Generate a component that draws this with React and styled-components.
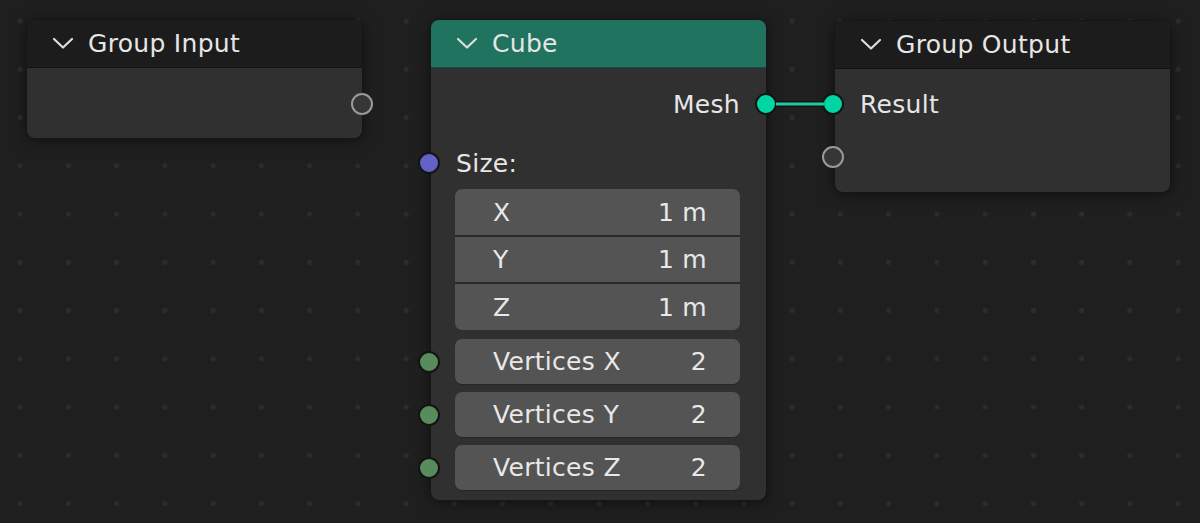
import React from "react";
import styled, { createGlobalStyle } from "styled-components";

const Global = createGlobalStyle`
  html, body { margin: 0; padding: 0; background: #1f1f1f; }
  body { font-family: "DejaVu Sans", "Liberation Sans", sans-serif; }
`;

const Canvas = styled.div`
  position: relative;
  width: 1200px;
  height: 523px;
  overflow: hidden;
  background-color: #1f1f1f;
  background-image: radial-gradient(circle, #2c2c2c 2.2px, transparent 3px);
  background-size: 48.25px 48.25px;
  background-position: -4px -3px;
`;

const Node = styled.div`
  position: absolute;
  left: ${(p) => p.$x}px;
  top: ${(p) => p.$y}px;
  width: 335px;
  background: #303030;
  border-radius: 8px;
  box-shadow: 0 0 0 1px #161616, 0 2px 14px rgba(0, 0, 0, 0.55);
  display: flex;
  flex-direction: column;
`;

const Header = styled.div`
  height: 48px;
  box-sizing: border-box;
  background: ${(p) => p.$color || "#1c1c1c"};
  border-radius: 8px 8px 0 0;
  border-bottom: 1px solid rgba(0, 0, 0, 0.35);
  display: flex;
  align-items: center;
  padding-left: 25px;
  gap: 14px;
  color: #e6e6e6;
  font-size: 25px;
  letter-spacing: 0.3px;
  line-height: 1;
`;

const Body = styled.div`
  display: flex;
  flex-direction: column;
  padding: ${(p) => p.$pad || "14px 0 12px"};
`;

const Row = styled.div`
  position: relative;
  height: ${(p) => p.$h || 44}px;
  margin-top: ${(p) => p.$mt || 0}px;
  display: flex;
  align-items: center;
  justify-content: ${(p) => (p.$right ? "flex-end" : "flex-start")};
  padding: 0 26px 0 25px;
  color: #e6e6e6;
  font-size: 25px;
  letter-spacing: 0.3px;
`;

const Socket = styled.span`
  position: absolute;
  top: 50%;
  ${(p) => (p.$side === "right" ? `right: ${p.$offset ?? -11}px;` : `left: ${p.$offset ?? -13}px;`)}
  width: 22px;
  height: 22px;
  margin-top: -11px;
  box-sizing: border-box;
  border-radius: 50%;
  background: ${(p) => p.$color || "#363636"};
  border: ${(p) => (p.$hollow ? "2px solid #9a9a9a" : "2px solid #141414")};
`;

const FieldGroup = styled.div`
  margin: 4px 26px 0 24px;
  display: flex;
  flex-direction: column;
  border-radius: 7px;
  overflow: hidden;
  background: #2a2a2a;
  gap: 2px;
`;

const Field = styled.div`
  height: ${(p) => p.$h || 45}px;
  background: #545454;
  display: flex;
  align-items: center;
  justify-content: space-between;
  padding: 0 33px 0 38px;
  color: #e8e8e8;
  font-size: 25px;
  letter-spacing: 0.3px;
  ${(p) => p.$single && "border-radius: 7px; box-shadow: 0 1px 0 #262626;"}
`;

const FieldRow = styled.div`
  position: relative;
  margin: ${(p) => p.$mt || 8}px 26px 0 24px;
  display: flex;
  flex-direction: column;
`;

const LinkSvg = styled.svg`
  position: absolute;
  left: 0;
  top: 0;
  pointer-events: none;
`;

const Chevron = () => (
  <svg width="22" height="13" viewBox="0 0 22 13">
    <polyline points="2,2 11,10.5 20,2" fill="none" stroke="#dedede" strokeWidth="2.2" strokeLinecap="round" strokeLinejoin="round" />
  </svg>
);

export default function App() {
  return (
    <>
      <Global />
      <Canvas>
        <Node $x={27} $y={20}>
          <Header>
            <Chevron />
            <span>Group Input</span>
          </Header>
          <Body $pad="14px 0 12px">
            <Row>
              <Socket $side="right" $hollow />
            </Row>
          </Body>
        </Node>

        <Node $x={431} $y={20}>
          <Header $color="#1f735f">
            <Chevron />
            <span>Cube</span>
          </Header>
          <Body $pad="14px 0 10px">
            <Row $right>
              Mesh
              <Socket $side="right" $color="#00d6a3" />
            </Row>
            <Row $mt={15}>
              <Socket $color="#6363c7" />
              Size:
            </Row>
            <FieldGroup>
              <Field $h={46}>
                <span>X</span>
                <span>1 m</span>
              </Field>
              <Field $h={45}>
                <span>Y</span>
                <span>1 m</span>
              </Field>
              <Field $h={46}>
                <span>Z</span>
                <span>1 m</span>
              </Field>
            </FieldGroup>
            {["X", "Y", "Z"].map((a, i) => (
              <FieldRow key={a} $mt={i === 0 ? 9 : 8}>
                <Socket $color="#598c5c" $offset={-37} />
                <Field $single $h={45}>
                  <span>Vertices {a}</span>
                  <span>2</span>
                </Field>
              </FieldRow>
            ))}
          </Body>
        </Node>

        <Node $x={835} $y={21}>
          <Header>
            <Chevron />
            <span>Group Output</span>
          </Header>
          <Body $pad="13px 0 13px">
            <Row>
              <Socket $color="#00d6a3" />
              Result
            </Row>
            <Row $mt={9}>
              <Socket $hollow />
            </Row>
          </Body>
        </Node>

        <LinkSvg width="1200" height="523">
          <line x1="776" y1="104" x2="824" y2="104" stroke="#141414" strokeWidth="6" />
          <line x1="776" y1="104" x2="824" y2="104" stroke="#1fc9a0" strokeWidth="3" />
        </LinkSvg>
      </Canvas>
    </>
  );
}
